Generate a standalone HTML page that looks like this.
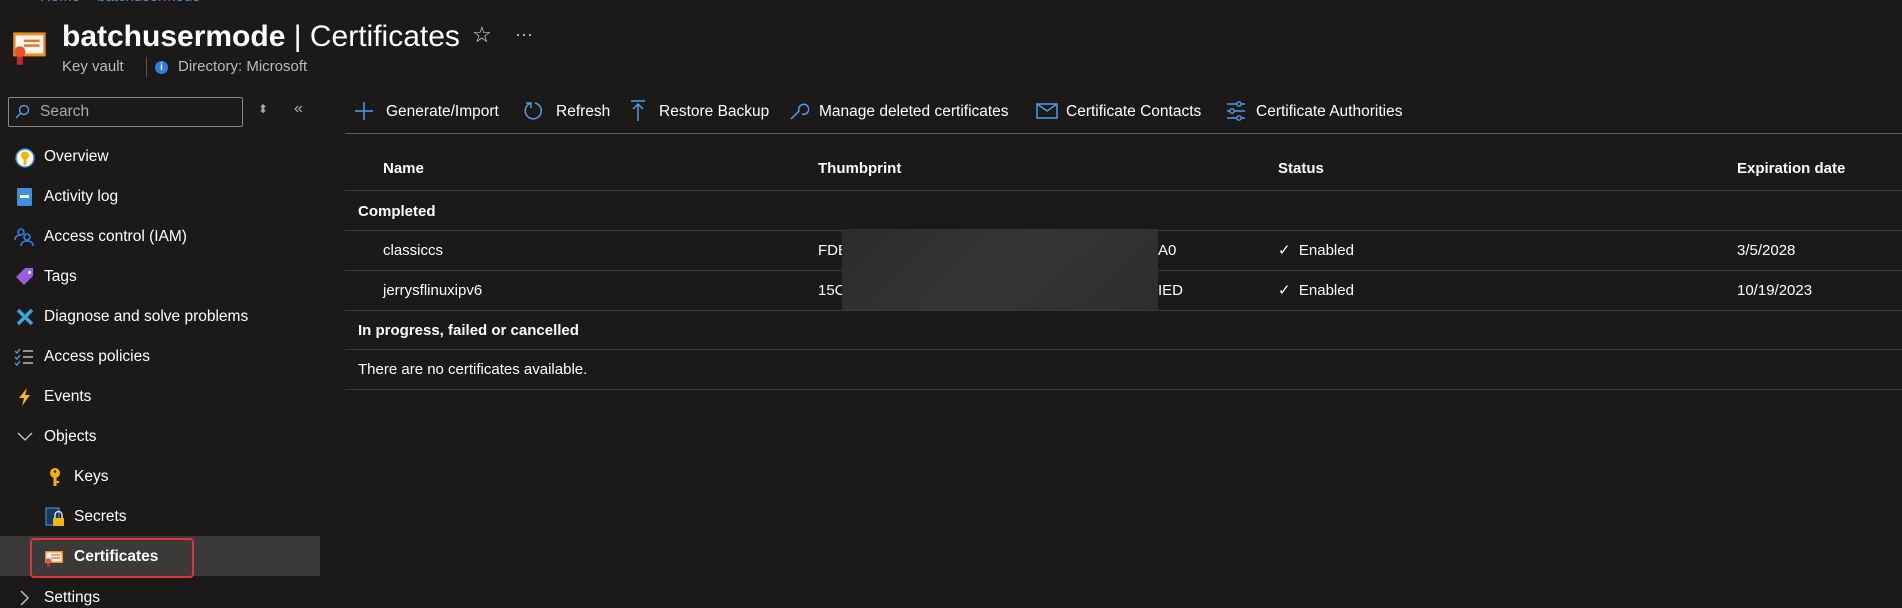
<!DOCTYPE html>
<html><head><meta charset="utf-8"><style>
*{margin:0;padding:0;box-sizing:border-box}
body{width:1902px;height:601px;background:#1b1a19;color:#fff;font-family:"Liberation Sans",sans-serif;position:relative;overflow:hidden;font-size:15px}
.a{position:absolute;white-space:nowrap}
.nav{position:absolute;left:44px;font-size:15.5px;line-height:20px}
.ic{position:absolute;width:20px;height:20px}
.tb{position:absolute;top:102px;font-size:15.5px;line-height:20px}
.hl{position:absolute;left:345px;right:0;height:1px;background:#3b3a39}
.th{position:absolute;top:160px;font-weight:bold;font-size:15px}
.td{position:absolute;font-size:15px;line-height:20px}
</style></head><body>
<div class="a" style="left:40px;top:-12px;color:#4f8fd6;font-size:15px">Home &gt; batchusermode</div>
<svg class="a" style="left:12px;top:30px" width="36" height="36" viewBox="0 0 30 30"><rect x="1" y="2" width="27" height="20" fill="#f28b1f"/><rect x="3" y="4.5" width="23" height="15" fill="#fff5ea"/><rect x="10" y="8" width="13" height="2" fill="#e0732c"/><rect x="10" y="12" width="13" height="2" fill="#e0732c"/><rect x="4" y="20" width="5" height="9" fill="#c3262f"/><circle cx="6.5" cy="18" r="4.5" fill="#e8532f"/></svg>
<div class="a" style="left:62px;top:17px;font-size:30px;line-height:40px"><b>batchusermode</b> | Certificates</div>
<div class="a" style="left:472px;top:22px;font-size:22px;color:#ddd">☆</div>
<div class="a" style="left:515px;top:24px;font-size:18px;color:#ccc">···</div>
<div class="a" style="left:62px;top:58px;font-size:15px;color:#bbb">Key vault</div>
<div class="a" style="left:146px;top:57px;width:1px;height:20px;background:#555"></div>
<div class="a" style="left:155px;top:61px;width:13px;height:13px;border-radius:50%;background:#2f7de1;font-size:10px;font-weight:bold;text-align:center;line-height:13px">i</div>
<div class="a" style="left:178px;top:58px;font-size:15px;color:#bbb">Directory: Microsoft</div>
<div class="a" style="left:8px;top:97px;width:235px;height:30px;border:1px solid #8a8886;border-radius:2px"></div>
<svg class="a" style="left:14px;top:104px" width="16" height="16" viewBox="0 0 16 16"><circle cx="10" cy="6" r="4.5" fill="none" stroke="#4f9de8" stroke-width="1.4"/><path d="M7 9L2 14" stroke="#4f9de8" stroke-width="1.5"/></svg>
<div class="a" style="left:40px;top:103px;color:#aaa;font-size:15.5px">Search</div>
<div class="a" style="left:258px;top:102px;color:#aaa;font-size:12px">⬍</div>
<div class="a" style="left:294px;top:100px;color:#aaa;font-size:16px">«</div>
<svg class="ic" style="left:15px;top:148px" viewBox="0 0 20 20"><circle cx="10" cy="10" r="9" fill="#fff" stroke="#3a87d9" stroke-width="1.5"/><circle cx="10" cy="7.5" r="4" fill="#f4b400"/><rect x="8.6" y="9" width="2.8" height="8" fill="#f4b400"/></svg>
<div class="nav" style="top:147px">Overview</div>
<svg class="ic" style="left:15px;top:187px" viewBox="0 0 20 20"><rect x="2" y="1" width="15" height="18" rx="1.5" fill="#3d8fe0"/><rect x="5" y="8" width="9" height="3" fill="#fff"/></svg>
<div class="nav" style="top:187px">Activity log</div>
<svg class="ic" style="left:14px;top:227px" viewBox="0 0 20 20"><g fill="none" stroke="#2f7de1" stroke-width="1.6"><circle cx="7" cy="5" r="3"/><path d="M1 13c0-4 3-5 6-5"/><circle cx="13" cy="10" r="3"/><path d="M7 19c0-4 3-5 6-5s6 1 6 5"/></g></svg>
<div class="nav" style="top:227px">Access control (IAM)</div>
<svg class="ic" style="left:15px;top:267px" viewBox="0 0 20 20"><path d="M10 1h8v8l-9 9-8-8z" fill="#9a5ee0"/><circle cx="14.5" cy="5.5" r="1.5" fill="#fff"/></svg>
<div class="nav" style="top:267px">Tags</div>
<svg class="ic" style="left:15px;top:307px" viewBox="0 0 20 20"><path d="M3 3l14 14M17 3L3 17" stroke="#39a5d8" stroke-width="3.5"/></svg>
<div class="nav" style="top:307px">Diagnose and solve problems</div>
<svg class="ic" style="left:14px;top:347px" viewBox="0 0 20 20"><path d="M1 4l2 2 3-4M1 10l2 2 3-4M1 16l2 2 3-4" stroke="#4f9de8" fill="none" stroke-width="1.3"/><path d="M9 4h10M9 10h10M9 16h10" stroke="#bbb" stroke-width="1.6"/></svg>
<div class="nav" style="top:347px">Access policies</div>
<svg class="ic" style="left:15px;top:387px" viewBox="0 0 20 20"><path d="M12 1L4 11h5l-2 8 8-11h-5z" fill="#f8b81f"/></svg>
<div class="nav" style="top:387px">Events</div>
<svg class="ic" style="left:15px;top:427px" viewBox="0 0 20 20"><path d="M3 6l7 7 7-7" stroke="#ccc" fill="none" stroke-width="1.3"/></svg>
<div class="nav" style="top:427px">Objects</div>
<svg class="ic" style="left:45px;top:467px" viewBox="0 0 20 20"><circle cx="10" cy="6" r="5" fill="#f4b400"/><rect x="8.5" y="9" width="3" height="10" fill="#f4b400"/><rect x="11" y="14" width="3" height="2" fill="#f4b400"/><circle cx="10" cy="4.5" r="1.3" fill="#1b1a19"/></svg>
<div class="nav" style="left:74px;top:467px">Keys</div>
<svg class="ic" style="left:45px;top:507px" viewBox="0 0 20 20"><rect x="1" y="1" width="13" height="17" fill="#16395a" stroke="#4f9de8"/><rect x="8" y="11" width="11" height="8" fill="#f4b400"/><path d="M10 11V8a3.5 3.5 0 017 0v3" stroke="#ddd" fill="none" stroke-width="1.5"/></svg>
<div class="nav" style="left:74px;top:507px">Secrets</div>
<div class="a" style="left:0;top:536px;width:320px;height:40px;background:#3b3a39"></div>
<div class="a" style="left:30px;top:538px;width:164px;height:40px;border:2px solid #e5333e;border-radius:4px"></div>
<svg class="ic" style="left:44px;top:548px" viewBox="0 0 20 20"><rect x="1" y="3" width="18" height="12" fill="#f28b1f"/><rect x="2.5" y="4.5" width="15" height="9" fill="#fff5ea"/><path d="M7 7h9M7 10h9" stroke="#e0732c" stroke-width="1.3"/><rect x="3" y="14" width="3" height="5" fill="#c3262f"/><circle cx="4.5" cy="13" r="2.8" fill="#e8532f"/></svg>
<div class="nav" style="left:74px;top:547px;font-weight:bold">Certificates</div>
<svg class="ic" style="left:15px;top:588px" viewBox="0 0 20 20"><path d="M6 3l7 7-7 7" stroke="#ccc" fill="none" stroke-width="1.3"/></svg>
<div class="nav" style="top:588px">Settings</div>

<svg class="a" style="left:354px;top:101px" width="20" height="20"><path d="M10 1v18M1 10h18" stroke="#4f9de8" stroke-width="1.5"/></svg>
<div class="tb" style="left:386px">Generate/Import</div>
<svg class="a" style="left:523px;top:100px" width="22" height="22"><path d="M7 3.5A8 8 0 1 0 12 3" fill="none" stroke="#4f9de8" stroke-width="1.5"/><path d="M3 3h5v5" fill="none" stroke="#4f9de8" stroke-width="1.5"/></svg>
<div class="tb" style="left:556px">Refresh</div>
<svg class="a" style="left:630px;top:100px" width="16" height="22"><path d="M1 1h14M8 4v17M3 9l5-5 5 5" fill="none" stroke="#4f9de8" stroke-width="1.5"/></svg>
<div class="tb" style="left:659px">Restore Backup</div>
<svg class="a" style="left:789px;top:101px" width="20" height="20"><path d="M2 18l8-8a5 5 0 1 1 3 3" fill="none" stroke="#4f9de8" stroke-width="1.5"/></svg>
<div class="tb" style="left:819px">Manage deleted certificates</div>
<svg class="a" style="left:1036px;top:103px" width="22" height="16"><rect x="1" y="1" width="20" height="14" fill="none" stroke="#4f9de8" stroke-width="1.5"/><path d="M1 1l10 7 10-7" fill="none" stroke="#4f9de8" stroke-width="1.5"/></svg>
<div class="tb" style="left:1066px">Certificate Contacts</div>
<svg class="a" style="left:1226px;top:101px" width="20" height="20"><g stroke="#4f9de8" stroke-width="1.4" fill="none"><path d="M1 3h18M1 10h18M1 17h18"/><circle cx="13" cy="3" r="2.2" fill="#1b1a19"/><circle cx="6" cy="10" r="2.2" fill="#1b1a19"/><circle cx="13" cy="17" r="2.2" fill="#1b1a19"/></g></svg>
<div class="tb" style="left:1256px">Certificate Authorities</div>
<div class="a" style="left:345px;top:133px;right:0;height:1px;background:#605e5c"></div>

<div class="th" style="left:383px">Name</div>
<div class="th" style="left:818px">Thumbprint</div>
<div class="th" style="left:1278px">Status</div>
<div class="th" style="left:1737px">Expiration date</div>
<div class="hl" style="top:190px"></div>
<div class="td" style="left:358px;top:202px;font-weight:bold">Completed</div>
<div class="hl" style="top:230px"></div>
<div class="td" style="left:383px;top:241px">classiccs</div>
<div class="td" style="left:818px;top:241px">FDE</div>
<div class="td" style="left:1158px;top:241px">A0</div>
<div class="td" style="left:1278px;top:241px">✓&nbsp; Enabled</div>
<div class="td" style="left:1737px;top:241px">3/5/2028</div>
<div class="hl" style="top:270px"></div>
<div class="td" style="left:383px;top:281px">jerrysflinuxipv6</div>
<div class="td" style="left:818px;top:281px">15C</div>
<div class="td" style="left:1158px;top:281px">IED</div>
<div class="td" style="left:1278px;top:281px">✓&nbsp; Enabled</div>
<div class="td" style="left:1737px;top:281px">10/19/2023</div>
<div class="hl" style="top:310px"></div>
<div class="a" style="left:842px;top:229px;width:316px;height:81px;background:linear-gradient(135deg,#2c2c2c,#353535 50%,#2e2e2e)"></div>
<div class="td" style="left:358px;top:321px;font-weight:bold">In progress, failed or cancelled</div>
<div class="hl" style="top:349px"></div>
<div class="td" style="left:358px;top:360px">There are no certificates available.</div>
<div class="hl" style="top:389px"></div>
</body></html>
